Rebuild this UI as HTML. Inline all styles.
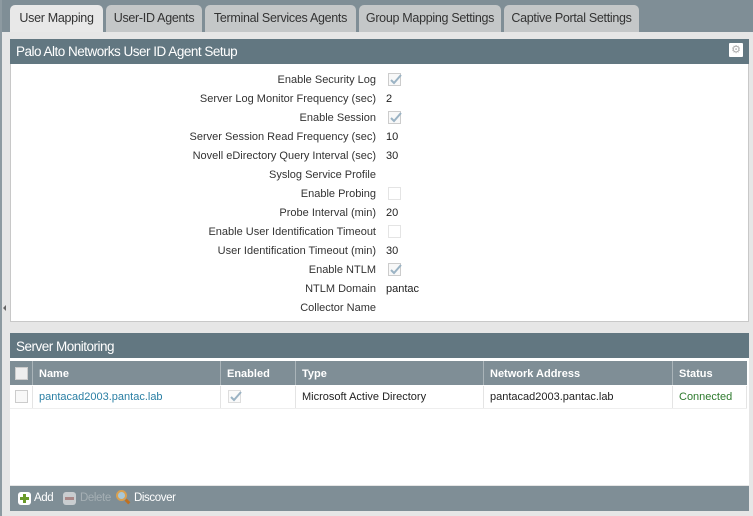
<!DOCTYPE html>
<html><head><style>
*{margin:0;padding:0;box-sizing:border-box}
body{width:753px;height:516px;background:#7f8e96;position:relative;overflow:hidden;font-family:"Liberation Sans",sans-serif}
.abs{position:absolute}
.tab{position:absolute;top:5px;height:27px;background:#c4c7c8;border-radius:5px 5px 0 0;font-size:12.5px;color:#333;text-align:center;line-height:27px;letter-spacing:-0.3px}
.tab.act{background:#e8e8e8}
.content{position:absolute;left:2px;top:32px;width:751px;height:484px;background:#e6e6e6}
.hdr{position:absolute;background:#627781;color:#fff;font-size:13.5px;letter-spacing:-0.5px;padding-left:6px;line-height:25px}
.lbl{position:absolute;right:377px;font-size:11px;color:#333;text-align:right;white-space:nowrap}
.val{position:absolute;left:386px;font-size:11px;color:#222}
.cb{position:absolute;width:13px;height:13px;border:1px solid #ccc;background:#f8f8f8}
.cb svg{position:absolute;left:0;top:-1px}
.th{position:absolute;top:361px;height:24px;background:#7f8e96;color:#fff;font-size:11px;font-weight:bold;line-height:26px;padding-left:6px;border-left:1px solid #aab4b9}
.td{position:absolute;top:386px;height:22px;font-size:11px;line-height:23px;padding-left:6px;border-left:1px solid #e4e4e4;color:#222}
</style></head><body>
<div class="abs" style="left:0;top:0;width:2px;height:516px;background:#8d9aa1"></div>
<div class="tab act" style="left:10px;width:93px">User Mapping</div>
<div class="tab" style="left:106px;width:96px">User-ID Agents</div>
<div class="tab" style="left:205px;width:151px">Terminal Services Agents</div>
<div class="tab" style="left:359px;width:142px">Group Mapping Settings</div>
<div class="tab" style="left:504px;width:135px">Captive Portal Settings</div>
<div class="content"></div>
<div class="abs" style="left:3px;top:305px;width:0;height:0;border-top:3px solid transparent;border-bottom:3px solid transparent;border-right:3px solid #666"></div>

<div class="abs" style="left:10px;top:39px;width:739px;height:283px;background:#fff;border:1px solid #c8c8c8"></div>
<div class="hdr" style="left:10px;top:39px;width:739px">Palo Alto Networks User ID Agent Setup</div>
<div class="abs" style="left:729px;top:43px;width:14px;height:14px;background:#fff;border-radius:1px;color:#aaa;font-size:11px;line-height:14px;text-align:center">⚙</div>

<div class="lbl" style="top:74px">Enable Security Log</div>
<div class="lbl" style="top:93px">Server Log Monitor Frequency (sec)</div><div class="val" style="top:93px">2</div>
<div class="lbl" style="top:112px">Enable Session</div>
<div class="lbl" style="top:131px">Server Session Read Frequency (sec)</div><div class="val" style="top:131px">10</div>
<div class="lbl" style="top:150px">Novell eDirectory Query Interval (sec)</div><div class="val" style="top:150px">30</div>
<div class="lbl" style="top:169px">Syslog Service Profile</div>
<div class="lbl" style="top:188px">Enable Probing</div>
<div class="lbl" style="top:207px">Probe Interval (min)</div><div class="val" style="top:207px">20</div>
<div class="lbl" style="top:226px">Enable User Identification Timeout</div>
<div class="lbl" style="top:245px">User Identification Timeout (min)</div><div class="val" style="top:245px">30</div>
<div class="lbl" style="top:264px">Enable NTLM</div>
<div class="lbl" style="top:283px">NTLM Domain</div><div class="val" style="top:283px">pantac</div>
<div class="lbl" style="top:302px">Collector Name</div>

<div class="cb" style="left:388px;top:73px"><svg width="14" height="14"><path d="M2 7 L5 10 L12 2" stroke="#9bb3c4" stroke-width="2" fill="none"/></svg></div>
<div class="cb" style="left:388px;top:111px"><svg width="14" height="14"><path d="M2 7 L5 10 L12 2" stroke="#9bb3c4" stroke-width="2" fill="none"/></svg></div>
<div class="cb" style="left:388px;top:187px;border-color:#e4e4e4;background:#fff"></div>
<div class="cb" style="left:388px;top:225px;border-color:#e4e4e4;background:#fff"></div>
<div class="cb" style="left:388px;top:263px"><svg width="14" height="14"><path d="M2 7 L5 10 L12 2" stroke="#9bb3c4" stroke-width="2" fill="none"/></svg></div>

<div class="abs" style="left:10px;top:333px;width:739px;height:152px;background:#fff"></div>
<div class="hdr" style="left:10px;top:333px;width:739px;height:25px;line-height:27px">Server Monitoring</div>
<div class="abs" style="left:10px;top:358px;width:739px;height:3px;background:#fff"></div>
<div class="th" style="left:10px;width:22px;border-left:none"></div>
<div class="cb" style="left:15px;top:367px;background:#eee"></div>
<div class="th" style="left:32px;width:188px">Name</div>
<div class="th" style="left:220px;width:75px">Enabled</div>
<div class="th" style="left:295px;width:188px">Type</div>
<div class="th" style="left:483px;width:189px">Network Address</div>
<div class="th" style="left:672px;width:75px">Status</div>
<div class="cb" style="left:15px;top:390px"></div>
<div class="td" style="left:32px;width:188px;color:#2a7fa4">pantacad2003.pantac.lab</div>
<div class="td" style="left:220px;width:75px"></div>
<div class="cb" style="left:228px;top:390px;border-color:#ddd;background:#fafafa"><svg width="14" height="14"><path d="M2 7 L5 10 L12 2" stroke="#9bb3c4" stroke-width="2" fill="none"/></svg></div>
<div class="td" style="left:295px;width:188px">Microsoft Active Directory</div>
<div class="td" style="left:483px;width:189px">pantacad2003.pantac.lab</div>
<div class="td" style="left:672px;width:75px;color:#2d7a2d;border-right:1px solid #e4e4e4">Connected</div>
<div class="abs" style="left:10px;top:408px;width:737px;height:1px;background:#eee"></div>

<div class="abs" style="left:10px;top:486px;width:739px;height:25px;background:#7f8e96"></div>
<div class="abs" style="left:18px;top:492px;width:13px;height:13px;background:#fff;border-radius:3px"></div>
<div class="abs" style="left:20px;top:497px;width:9px;height:3px;background:#6a9a2a"></div>
<div class="abs" style="left:23px;top:494px;width:3px;height:9px;background:#6a9a2a"></div>
<div class="abs" style="left:34px;top:492px;font-size:11.5px;color:#fff;letter-spacing:-0.4px">Add</div>
<div class="abs" style="left:63px;top:492px;width:13px;height:13px;background:#c9cdd0;border-radius:3px"></div>
<div class="abs" style="left:65px;top:497px;width:9px;height:3px;background:#a88"></div>
<div class="abs" style="left:80px;top:492px;font-size:11.5px;color:#a5afb4;letter-spacing:-0.4px">Delete</div>
<div class="abs" style="left:116px;top:490px;width:11px;height:11px;border:2px solid #d9a050;border-radius:50%;background:#a8c8d8"></div>
<div class="abs" style="left:125px;top:500px;width:5px;height:3px;background:#c07020;transform:rotate(45deg)"></div>
<div class="abs" style="left:134px;top:492px;font-size:11.5px;color:#fff;letter-spacing:-0.4px">Discover</div>
</body></html>
